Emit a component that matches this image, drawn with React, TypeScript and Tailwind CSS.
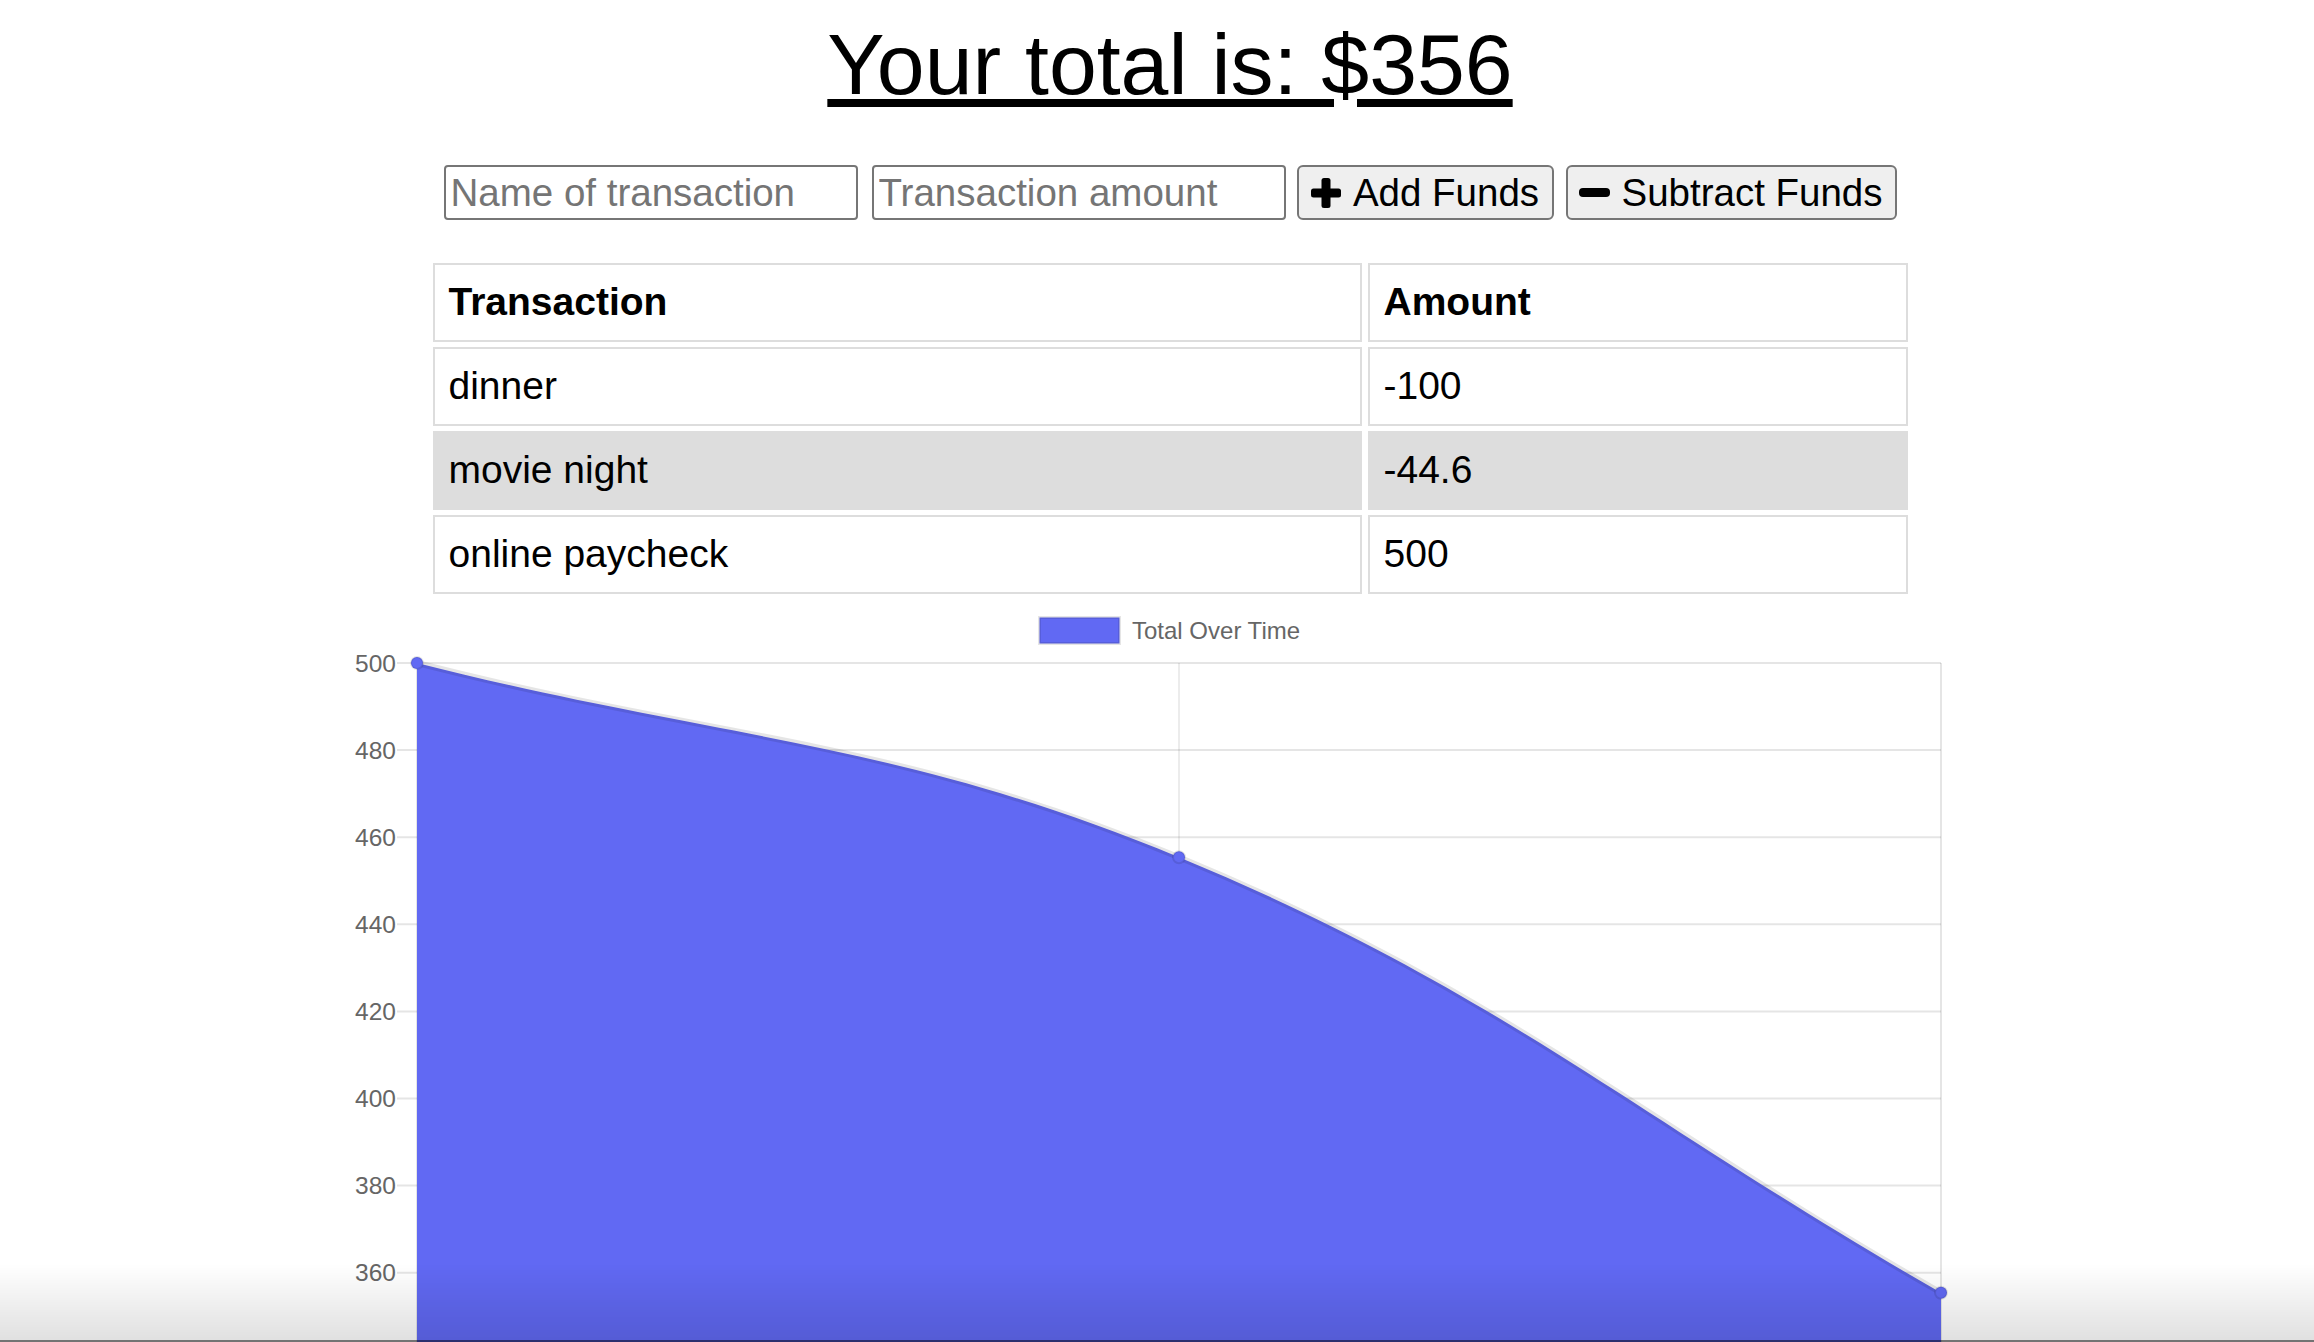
import React from 'react';

type Row = { name: string; amount: string; shaded?: boolean };

const rows: Row[] = [
  { name: 'dinner', amount: '-100' },
  { name: 'movie night', amount: '-44.6', shaded: true },
  { name: 'online paycheck', amount: '500' },
];

const FILL = '#6169f3';
const LINE = 'rgba(0,0,0,0.1)';

// y position of a value on the chart (500 at the top gridline, 87.1px per 20)
const yOf = (v: number) => 663 + ((500 - v) / 20) * 87.1;

const PlusIcon = () => (
  <svg width="30" height="30" viewBox="0 0 30 30" className="flex-shrink-0">
    <rect x="10.5" y="0" width="9" height="30" rx="2.5" fill="#000" />
    <rect x="0" y="10.5" width="30" height="9" rx="2.5" fill="#000" />
  </svg>
);

const MinusIcon = () => (
  <svg width="31" height="9" viewBox="0 0 31 9" className="flex-shrink-0">
    <rect x="0" y="0" width="31" height="9" rx="4" fill="#000" />
  </svg>
);

const TotalChart: React.FC = () => {
  const ticks = [500, 480, 460, 440, 420, 400, 380, 360];
  const p0 = { x: 417, y: yOf(500) };
  const p1 = { x: 1179, y: yOf(455.4) };
  const p2 = { x: 1941, y: yOf(355.4) };
  // chart.js style spline (tension 0.4)
  const c1 = { x: p0.x + 0.4 * (p1.x - p0.x), y: p0.y + 0.4 * (p1.y - p0.y) };
  const c2 = { x: p1.x - 0.1889 * (p2.x - p0.x), y: p1.y - 0.1889 * (p2.y - p0.y) };
  const c3 = { x: p1.x + 0.2111 * (p2.x - p0.x), y: p1.y + 0.2111 * (p2.y - p0.y) };
  const c4 = { x: p2.x - 0.4 * (p2.x - p1.x), y: p2.y - 0.4 * (p2.y - p1.y) };
  const curve = `M${p0.x},${p0.y} C${c1.x},${c1.y} ${c2.x},${c2.y} ${p1.x},${p1.y} C${c3.x},${c3.y} ${c4.x},${c4.y} ${p2.x},${p2.y}`;

  return (
    <svg
      width="1740"
      height="800"
      viewBox="300 600 1740 800"
      className="mx-auto block"
      fontFamily="'Liberation Sans', Arial, sans-serif"
    >
      {/* legend */}
      <rect x="1039.5" y="617.5" width="80" height="26" fill={FILL} stroke={LINE} strokeWidth="3" />
      <text x="1132" y="639" fontSize="24" fill="#666">
        Total Over Time
      </text>

      {/* grid */}
      {ticks.map((t) => (
        <g key={t}>
          <line x1="397" x2="1941" y1={yOf(t)} y2={yOf(t)} stroke={LINE} strokeWidth="2" />
          <text x="396" y={yOf(t) + 8.5} fontSize="24.5" fill="#666" textAnchor="end">
            {t}
          </text>
        </g>
      ))}
      <line x1="1179" x2="1179" y1="663" y2="1400" stroke={LINE} strokeWidth="1.5" />
      <line x1="1941" x2="1941" y1="663" y2="1400" stroke={LINE} strokeWidth="2" />
      <line x1="417" x2="417" y1="663" y2="1400" stroke={LINE} strokeWidth="2" />

      {/* area */}
      <path d={`${curve} L1941,1400 L417,1400 Z`} fill={FILL} />
      <path d={curve} fill="none" stroke={LINE} strokeWidth="6" />
      {[p0, p1, p2].map((p, i) => (
        <circle key={i} cx={p.x} cy={p.y} r="6" fill={FILL} stroke={LINE} strokeWidth="2" />
      ))}
    </svg>
  );
};

const App: React.FC = () => {
  return (
    <div className="relative min-h-screen overflow-hidden bg-white pl-[26px] font-['Liberation_Sans',Arial,sans-serif] text-black">
      <h1 className="mt-[14px] text-center text-[86px] leading-[100px] font-normal underline">
        Your total is: $356
      </h1>

      <div className="mt-[51px] flex justify-center">
        <input
          type="text"
          placeholder="Name of transaction"
          className="h-[55px] w-[414px] rounded-[4px] border-2 border-[#767676] px-[5px] text-[38.5px] outline-none placeholder:text-[#757575]"
        />
        <input
          type="number"
          placeholder="Transaction amount"
          className="ml-[14px] h-[55px] w-[414px] rounded-[4px] border-2 border-[#767676] px-[5px] text-[38.5px] outline-none placeholder:text-[#757575]"
        />
        <button className="ml-[11px] flex h-[55px] w-[257px] items-center justify-center gap-[12px] rounded-[6px] border-2 border-[#767676] bg-[#efefef] text-[38.5px]">
          <PlusIcon />
          <span>Add Funds</span>
        </button>
        <button className="ml-[12px] flex h-[55px] w-[331px] items-center justify-center gap-[11px] rounded-[6px] border-2 border-[#767676] bg-[#efefef] text-[38.5px]">
          <MinusIcon />
          <span>Subtract Funds</span>
        </button>
      </div>

      <table className="mx-auto mt-[38px] border-separate border-spacing-x-[6px] border-spacing-y-[5px] text-[39px]">
        <thead>
          <tr>
            <th className="h-[79px] w-[929px] border-2 border-[#dddddd] pl-[14px] text-left font-bold">Transaction</th>
            <th className="h-[79px] w-[540px] border-2 border-[#dddddd] pl-[14px] text-left font-bold">Amount</th>
          </tr>
        </thead>
        <tbody>
          {rows.map((r) => (
            <tr key={r.name} className={r.shaded ? 'bg-[#dddddd]' : ''}>
              <td className="h-[79px] border-2 border-[#dddddd] pl-[14px]">{r.name}</td>
              <td className="h-[79px] border-2 border-[#dddddd] pl-[14px]">{r.amount}</td>
            </tr>
          ))}
        </tbody>
      </table>

      <div className="mt-[1px]">
        <TotalChart />
      </div>

      {/* bottom edge shading of the window */}
      <div className="pointer-events-none fixed inset-x-0 bottom-0 h-[78px] border-b-2 border-black/55 bg-linear-to-b from-transparent to-black/12" />
    </div>
  );
};

export default App;
